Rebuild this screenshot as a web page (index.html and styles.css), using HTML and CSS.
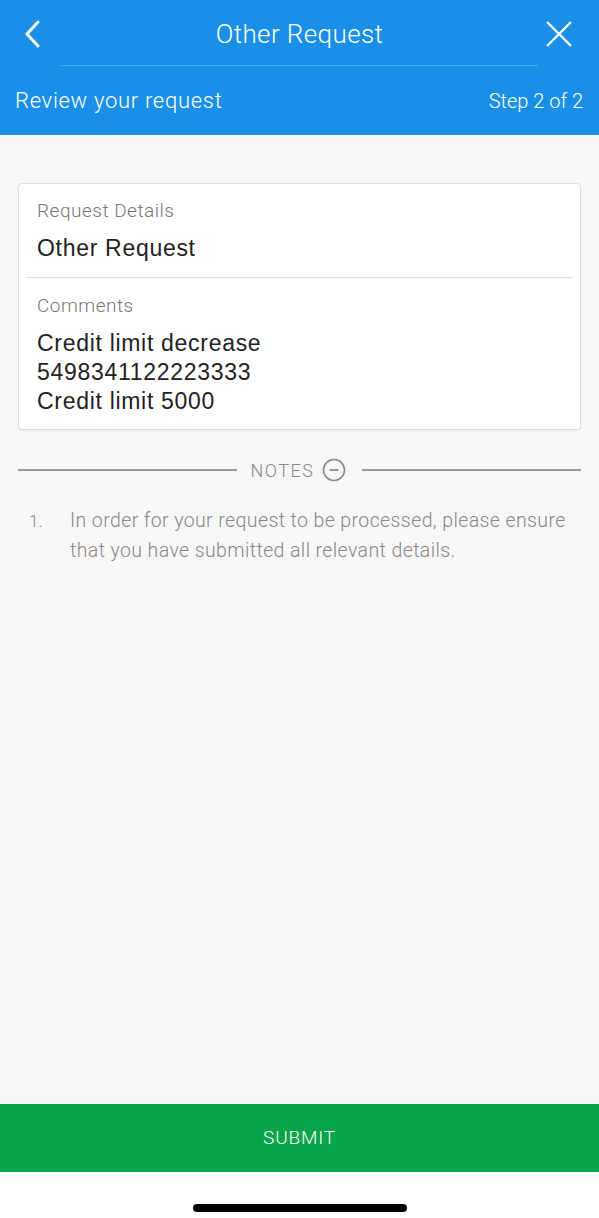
FILE: index.html
```html
<!DOCTYPE html>
<html>
<head>
<meta charset="utf-8">
<link rel="stylesheet" href="styles.css">
</head>
<body>
<div class="screen">
  <header class="header">
    <div class="topbar">
      <button class="icon-btn back" aria-label="Back">
        <svg width="20" height="28" viewBox="0 0 20 28"><path d="M15 2 L4 14 L15 26" fill="none" stroke="#fff" stroke-width="3" stroke-linecap="round" stroke-linejoin="round"/></svg>
      </button>
      <h1 class="title">Other Request</h1>
      <button class="icon-btn close" aria-label="Close">
        <svg width="28" height="28" viewBox="0 0 28 28"><path d="M2 2 L26 26 M26 2 L2 26" fill="none" stroke="#fff" stroke-width="2.4" stroke-linecap="square"/></svg>
      </button>
    </div>
    <div class="subbar">
      <span class="sub-left">Review your request</span>
      <span class="sub-right">Step 2 of 2</span>
    </div>
  </header>

  <main class="content">
    <section class="card">
      <div class="field first">
        <div class="label">Request Details</div>
        <div class="value">Other Request</div>
      </div>
      <div class="divider"></div>
      <div class="field comments">
        <div class="label">Comments</div>
        <div class="value multi">Credit limit decrease<br>5498341122223333<br>Credit limit 5000</div>
      </div>
    </section>

    <div class="notes-head">
      <span class="rule"></span>
      <span class="notes-label">NOTES</span>
      <svg class="notes-icon" width="24" height="24" viewBox="0 0 24 24"><circle cx="12" cy="12" r="10.5" fill="none" stroke="#8a8a8a" stroke-width="1.6"/><path d="M7.5 12 H16.5" stroke="#8a8a8a" stroke-width="1.8"/></svg>
      <span class="rule"></span>
    </div>

    <ol class="notes-list">
      <li><span class="num">1.</span><span class="txt">In order for your request to be processed, please ensure that you have submitted all relevant details.</span></li>
    </ol>
  </main>

  <button class="submit">SUBMIT</button>
  <div class="home-area"><span class="home-bar"></span></div>
</div>
</body>
</html>
```

FILE: styles.css
```css
* { box-sizing: border-box; }
html, body { margin: 0; padding: 0; }
body {
  width: 599px;
  height: 1218px;
  background: #ffffff;
  font-family: "Liberation Sans", Arial, sans-serif;
  overflow: hidden;
}
.screen {
  display: flex;
  flex-direction: column;
  height: 1218px;
}
.header {
  background: #1a8fe8;
  color: #fff;
  height: 135px;
  display: flex;
  flex-direction: column;
}
.topbar {
  height: 66px;
  display: flex;
  align-items: center;
  justify-content: space-between;
  padding: 0 24px 0 18px;
  position: relative;
}
.topbar::after {
  content: "";
  position: absolute;
  left: 61px;
  right: 61px;
  bottom: 0;
  height: 1px;
  background: #4aa9ee;
}
.icon-btn {
  background: none;
  border: 0;
  padding: 0;
  width: 32px;
  height: 32px;
  display: flex;
  align-items: center;
  justify-content: center;
  margin-top: 2px;
}
.back { justify-content: flex-start; padding-left: 5px; width: 38px; }
.close { width: 32px; }
.close svg { width: 26px; height: 26px; }
.title {
  margin: 0;
  font-family: Roboto, "Liberation Sans", sans-serif;
  font-weight: 300;
  font-size: 26px;
  letter-spacing: 0.4px;
  margin-top: 2px;
}
.subbar {
  flex: 1;
  display: flex;
  align-items: center;
  justify-content: space-between;
  padding: 0 16px 0 15px;
  font-family: Roboto, "Liberation Sans", sans-serif;
  font-weight: 300;
}
.sub-left { font-size: 22px; letter-spacing: 0.7px; }
.sub-right { font-size: 20px; letter-spacing: 0; }

.content {
  flex: 1;
  background: #f7f7f7;
  padding: 48px 18px 0 18px;
}
.card {
  background: #fff;
  border: 1px solid #dcdcdc;
  border-radius: 4px;
  box-shadow: 0 1px 2px rgba(0,0,0,0.06);
  padding: 0 7px;
}
.field { padding: 14px 11px; }
.label {
  font-family: Roboto, "Liberation Sans", sans-serif;
  font-weight: 300;
  color: #777;
  font-size: 19px;
  line-height: 26px;
  letter-spacing: 0.5px;
}
.value {
  color: #222;
  font-size: 23px;
  line-height: 29px;
  letter-spacing: 0.7px;
  margin-top: 10px;
}
.first { padding-top: 14px; padding-bottom: 14px; }
.comments { padding-top: 15px; padding-bottom: 13px; }
.comments .value { margin-top: 10px; }
.divider { height: 1px; background: #e2e2e2; }

.notes-head {
  display: flex;
  align-items: center;
  margin-top: 28px;
  height: 24px;
}
.rule { flex: 1; height: 1.5px; background: #9a9a9a; }
.notes-label {
  font-family: Roboto, "Liberation Sans", sans-serif;
  font-weight: 300;
  color: #888;
  font-size: 18px;
  letter-spacing: 1.5px;
  margin: 0 8px 0 14px;
}
.notes-icon { margin-right: 16px; }

.notes-list {
  list-style: none;
  margin: 24px 0 0 0;
  padding: 0 10px 0 11px;
}
.notes-list li {
  display: flex;
  font-family: Roboto, "Liberation Sans", sans-serif;
  font-weight: 300;
  color: #888;
  font-size: 19.5px;
  line-height: 30px;
}
.num { width: 41px; flex: none; font-size: 17px; }
.txt { flex: 1; letter-spacing: 0.4px; }

.submit {
  height: 68px;
  border: 0;
  background: #06a54a;
  color: #fff;
  font-family: Roboto, "Liberation Sans", sans-serif;
  font-weight: 300;
  font-size: 19px;
  letter-spacing: 0.8px;
  width: 100%;
  padding: 0 0 2px 0;
}
.home-area {
  height: 46px;
  background: #fff;
  display: flex;
  justify-content: center;
  padding-top: 32px;
}
.home-bar {
  width: 214px;
  height: 8px;
  border-radius: 4px;
  background: #000;
}
```
